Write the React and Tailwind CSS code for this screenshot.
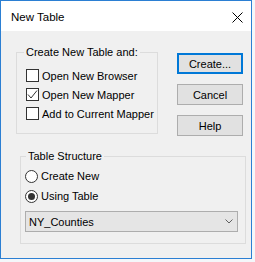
const Check = ({ checked }) => (
  <span className="w-[13px] h-[13px] border border-[#333333] bg-white flex items-center justify-center shrink-0">
    {checked && (
      <svg width="11" height="11" viewBox="0 0 11 11">
        <path d="M1 5.5 L4 9 L10 1.5" fill="none" stroke="#333333" strokeWidth="1" />
      </svg>
    )}
  </span>
)

const Radio = ({ checked }) => (
  <span className="w-[13px] h-[13px] rounded-full border border-[#333333] bg-white flex items-center justify-center shrink-0">
    {checked && <span className="w-[7px] h-[7px] rounded-full bg-[#333333]" />}
  </span>
)

const Button = ({ children, primary }) => (
  <div
    className={
      "w-[66px] h-[21px] bg-[#e1e1e1] flex items-center justify-center " +
      (primary ? "border-2 border-[#0078d7]" : "border border-[#adadad]")
    }
  >
    {children}
  </div>
)

const App = () => {
  return (
    <div
      className="w-[255px] h-[262px] bg-[#f4f7fa] text-[11px] text-black leading-[14px]"
      style={{ fontFamily: '"Liberation Sans", Arial, sans-serif' }}
    >
      <div className="w-[252px] h-[259px] border border-[#2b7fd3] bg-[#f0f0f0] flex flex-col">
        {/* Title bar */}
        <div className="h-[30px] bg-white flex items-center justify-between pl-[10px] pr-[8px] shrink-0">
          <span className="text-[11.5px] pt-[2px]">New Table</span>
          <svg width="11" height="11" viewBox="0 0 11 11" className="mt-[2px]">
            <path d="M0.5 0.5 L10.5 10.5 M10.5 0.5 L0.5 10.5" stroke="#000" strokeWidth="1" />
          </svg>
        </div>

        {/* Body */}
        <div className="flex flex-col">
          <div className="flex items-start mt-[14px]">
            <fieldset className="ml-[15px] w-[142px] border border-[#dcdcdc] pl-[9px] pt-[7px] pb-[10px]">
              <legend className="ml-[-2px] px-[2px]">Create New Table and:</legend>
              <div className="flex flex-col">
                <label className="h-[19px] flex items-center gap-[3px]">
                  <Check />
                  <span>Open New Browser</span>
                </label>
                <label className="h-[19px] flex items-center gap-[3px]">
                  <Check checked />
                  <span>Open New Mapper</span>
                </label>
                <label className="h-[19px] flex items-center gap-[3px]">
                  <Check />
                  <span>Add to Current Mapper</span>
                </label>
              </div>
            </fieldset>

            <div className="ml-[19px] mt-[8px] flex flex-col gap-[10px]">
              <Button primary>Create...</Button>
              <Button>Cancel</Button>
              <Button>Help</Button>
            </div>
          </div>

          <fieldset className="ml-[19px] mt-[13px] w-[226px] border border-[#dcdcdc] pl-[4px] pr-[7px] pt-[3px] pb-[11px]">
            <legend className="ml-[1px] px-[2px]">Table Structure</legend>
            <label className="h-[20px] flex items-center gap-[3px]">
              <Radio />
              <span>Create New</span>
            </label>
            <label className="h-[20px] flex items-center gap-[3px]">
              <Radio checked />
              <span>Using Table</span>
            </label>
            <div className="mt-[5px] h-[21px] bg-[#e5e5e5] border border-[#adadad] flex items-center justify-between pl-[3px] pr-[4px]">
              <span>NY_Counties</span>
              <svg width="8" height="5" viewBox="0 0 8 5">
                <path d="M0.5 0.5 L4 4 L7.5 0.5" fill="none" stroke="#606060" strokeWidth="1" />
              </svg>
            </div>
          </fieldset>
        </div>
      </div>
    </div>
  )
}

export default App
